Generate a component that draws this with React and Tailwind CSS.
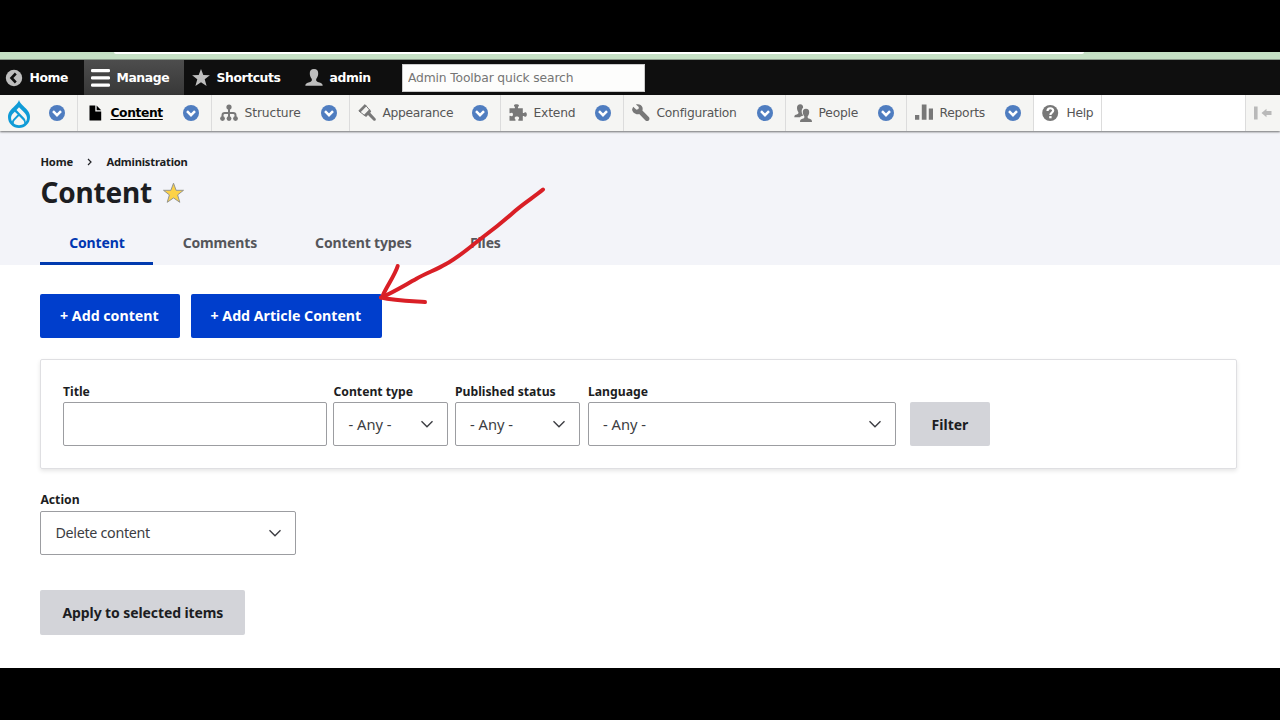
import clsx from "clsx";

const TRAY_ITEMS = [
  { label: "Content", icon: FileIcon, width: "w-[134px]", text: "text-[12.3px] tracking-[-0.4px]", active: true, menu: true },
  { label: "Structure", icon: StructureIcon, width: "w-[138px]", text: "text-[12.3px] tracking-[-0.12px]", menu: true },
  { label: "Appearance", icon: BrushIcon, width: "w-[151px]", text: "text-[12.3px] tracking-[-0.32px]", menu: true },
  { label: "Extend", icon: PuzzleIcon, width: "w-[123px]", text: "text-[12.3px] tracking-[-0.2px]", menu: true },
  { label: "Configuration", icon: WrenchIcon, width: "w-[162px]", text: "text-[12.3px] tracking-[-0.25px]", menu: true },
  { label: "People", icon: PeopleIcon, width: "w-[121px]", text: "text-[12.3px] tracking-[-0.2px]", menu: true },
  { label: "Reports", icon: BarsIcon, width: "w-[127px]", text: "text-[12.3px] tracking-[-0.25px]", menu: true },
  { label: "Help", icon: HelpIcon, width: "w-[68px]", text: "text-[12.3px] tracking-[-0.3px]", plain: true },
];

const TABS = [
  { label: "Content", width: "w-[113px]", active: true },
  { label: "Comments", width: "w-[133px]" },
  { label: "Content types", width: "w-[154px]" },
  { label: "Files", width: "w-[90px]" },
];

export default function App() {
  return (
    <div className="relative flex h-[720px] w-[1280px] flex-col overflow-hidden bg-black pt-[52px] pb-[52px] font-['Noto_Sans',sans-serif] text-[#1c1d22]">
      <BrowserEdge />
      <AdminBar />
      <Tray />
      <PageHeader />
      <main className="flex-1 bg-white pt-[29px] pl-[40.4px]">
        <div className="flex gap-[11px]">
          <PrimaryButton className="w-[140px]">+ Add content</PrimaryButton>
          <PrimaryButton className="w-[191px]">+ Add Article Content</PrimaryButton>
        </div>
        <Filters />
        <BulkActions />
      </main>
      <Annotation />
    </div>
  );
}

function BrowserEdge() {
  return (
    <div className="h-[8px] shrink-0 border-b border-[#8a9a8b] bg-[#c5e0c5]">
      <div className="ml-[114px] h-[2px] w-[970px] rounded-b-full bg-white" />
    </div>
  );
}

function AdminBar() {
  return (
    <div className="flex h-[35px] shrink-0 items-center bg-[#0f0f0f] font-['DejaVu_Sans',Verdana,sans-serif] text-[12.4px] font-bold text-white">
      <BarLink icon={BackIcon} label="Home" className="w-[84px] pl-[5px]" />
      <BarLink
        icon={MenuIcon}
        label="Manage"
        className="w-[100px] bg-linear-to-b from-[#4d4d4d] to-[#383838] pl-[7px]"
      />
      <BarLink icon={StarIcon} label="Shortcuts" className="w-[112px] pl-[8px]" />
      <BarLink icon={UserIcon} label="admin" className="w-[106px] pl-[9px]" />
      <input
        placeholder="Admin Toolbar quick search"
        className="h-[28px] w-[243px] border border-[#ccc] bg-[#fdfdfc] px-[5px] pt-px text-[12.3px] font-normal tracking-[-0.14px] text-[#333] placeholder:text-[#757575]"
      />
    </div>
  );
}

function BarLink({ icon: Icon, label, className }) {
  return (
    <div className={clsx("flex h-full items-center gap-[6.5px] whitespace-nowrap", className)}>
      <Icon />
      <span className="pt-px tracking-[-0.42px]">{label}</span>
    </div>
  );
}

function Tray() {
  return (
    <div className="z-10 flex h-[36px] shrink-0 bg-white font-['DejaVu_Sans',Verdana,sans-serif] text-[#565656] shadow-[0_1px_2px_rgba(0,0,0,0.55)]">
      <div className="flex w-[78px] items-center justify-between border-r border-[#dcdcdc] bg-[#f5f5f3] pr-[12px] pl-[8px]">
        <DrupalIcon />
        <MenuToggle />
      </div>
      {TRAY_ITEMS.map(({ label, icon: Icon, width, text, active, menu, plain }) => (
        <div
          key={label}
          className={clsx(
            "flex items-center border-r border-[#dcdcdc] pr-[12px] pl-[8px] whitespace-nowrap",
            width,
            plain ? "bg-white" : "bg-[#f5f5f3]",
          )}
        >
          <Icon />
          <span
            className={clsx(
              "ml-[6.5px]",
              text,
              active && "font-bold text-black underline decoration-1 underline-offset-2",
            )}
          >
            {label}
          </span>
          {menu && <MenuToggle />}
        </div>
      ))}
      <div className="ml-auto flex w-[35px] items-center border-l border-[#dcdcdc] bg-[#f5f5f3] pl-[8px]">
        <svg width="18" height="14" viewBox="0 0 18 14" fill="#b9b9b9">
          <path d="M0 .5h3.600v13H0zM7.500 7l5-4.300v2.300h5v4h-5v2.300z" />
        </svg>
      </div>
    </div>
  );
}

function MenuToggle() {
  return (
    <svg className="ml-auto shrink-0" width="16" height="16" viewBox="0 0 16 16">
      <circle cx="8" cy="8" r="8" fill="#4f7dc0" />
      <path d="M4 6.200l4 4 4-4" fill="none" stroke="#fff" strokeWidth="2.500" />
    </svg>
  );
}

function PageHeader() {
  return (
    <header className="h-[134px] shrink-0 bg-[#f3f4f9] pt-[21px] pl-[40.4px]">
      <div className="flex h-[20px] items-center text-[11.2px] leading-[18px] font-bold">
        <span className="w-[47px] tracking-[-0.1px]">Home</span>
        <svg width="5" height="8" viewBox="0 0 5 8" fill="none" stroke="#232429" strokeWidth="1.200">
          <path d="M1 1l3 3-3 3" />
        </svg>
        <span className="ml-[14px] tracking-[-0.2px]">Administration</span>
      </div>
      <div className="flex h-[40px] items-center">
        <h1 className="w-[122px] text-[28px] leading-[40px] font-bold tracking-[-0.2px]">Content</h1>
        <svg className="mt-[2px]" width="23" height="22" viewBox="0 0 23 22">
          <path
            d="M11.500 1.200l2.600 7.100h7.400l-5.900 4.600 2.200 7.400-6.300-4.400-6.300 4.400 2.200-7.400-5.900-4.600h7.400z"
            fill="#fdd247"
            stroke="#95958e"
            strokeWidth="1"
          />
        </svg>
      </div>
      <nav className="mt-[8px] flex h-[45px] text-[14px] font-bold tracking-[-0.14px]">
        {TABS.map((tab) => (
          <div
            key={tab.label}
            className={clsx(
              "flex items-center justify-center whitespace-nowrap",
              tab.width,
              tab.active ? "border-b-3 border-[#003aaf] pt-[3px] text-[#0036b1]" : "text-[#55565b]",
            )}
          >
            {tab.label}
          </div>
        ))}
      </nav>
    </header>
  );
}

function PrimaryButton({ className, children }) {
  return (
    <button
      className={clsx(
        "h-[44px] rounded-[2px] bg-[#003ecc] pr-[2px] text-[14.2px] font-bold whitespace-nowrap text-white",
        className,
      )}
    >
      {children}
    </button>
  );
}

function Filters() {
  return (
    <section className="mt-[21px] flex h-[110px] w-[1197px] items-start rounded-[2px] border border-[#dfdfe2] pt-[22px] pl-[21.6px] shadow-[0_2px_4px_rgba(0,0,0,0.1)]">
      <Field label="Title" className="w-[264px]">
        <input className="block h-[44px] w-full rounded-[2px] border border-[#9c9da1] bg-white" />
      </Field>
      <Field label="Content type" className="ml-[6.5px] w-[114.5px]">
        <Select value="- Any -" className="text-[14.7px]" />
      </Field>
      <Field label="Published status" className="ml-[7px] w-[125.5px]">
        <Select value="- Any -" className="text-[14.7px]" />
      </Field>
      <Field label="Language" className="ml-[7.5px] w-[308px]">
        <Select value="- Any -" className="text-[14.7px]" />
      </Field>
      <button className="mt-[20px] ml-[14px] h-[44px] w-[80px] rounded-[2px] bg-[#d3d4d9] text-[14px] font-bold">
        Filter
      </button>
    </section>
  );
}

function BulkActions() {
  return (
    <>
      <Field label="Action" className="mt-[21px] w-[256px]">
        <Select value="Delete content" className="mt-px text-[14.3px] tracking-[-0.3px]" />
      </Field>
      <button className="mt-[35px] block h-[45px] w-[205px] rounded-[2px] bg-[#d3d4d9] text-[14px] font-bold tracking-[-0.1px]">
        Apply to selected items
      </button>
    </>
  );
}

function Field({ label, className, children }) {
  return (
    <div className={className}>
      <div className="h-[20px] pt-px text-[12.2px] leading-[18px] font-bold whitespace-nowrap">{label}</div>
      {children}
    </div>
  );
}

function Select({ value, className }) {
  return (
    <div
      className={clsx(
        "flex h-[44px] items-center justify-between rounded-[2px] border border-[#9c9da1] bg-white pr-[13px] pl-[14px] text-[#3c3d42]",
        className,
      )}
    >
      <span>{value}</span>
      <svg width="14" height="9" viewBox="0 0 14 9" fill="none" stroke="#3c3d42" strokeWidth="1.400">
        <path d="M1.500 1.200l5.500 5.500 5.500-5.500" />
      </svg>
    </div>
  );
}

/* hand drawn arrow laid over the page */
function Annotation() {
  return (
    <svg
      className="pointer-events-none absolute top-[180px] left-[370px] z-20"
      width="190"
      height="130"
      viewBox="370 180 190 130"
      fill="none"
      stroke="#d91f26"
      strokeWidth="4"
      strokeLinecap="round"
      strokeLinejoin="round"
    >
      <path d="M543 189.500C534 197 524 203 515 211C504 221 494 229 483 237C470 247 459 257 446 264C436 270 426 273 416 279C405 285 392 293 381 297.500" />
      <path d="M397.700 266C395 275 387 286 383 295" />
      <path d="M381 297.500C394 300.500 410 301 425 302" />
    </svg>
  );
}

function Glyph({ children, fill = "#787878", ...rest }) {
  return (
    <svg className="shrink-0" width="18" height="18" viewBox="0 0 18 18" fill={fill} {...rest}>
      {children}
    </svg>
  );
}

function BackIcon() {
  return (
    <Glyph fill="#bebebe">
      <circle cx="9" cy="9" r="8.200" />
      <path d="M10.800 4.500L6.500 9l4.300 4.500" fill="none" stroke="#0f0f0f" strokeWidth="2.600" />
    </Glyph>
  );
}

function MenuIcon() {
  return (
    <svg className="shrink-0" width="19" height="18" viewBox="0 0 19 18" fill="#fff">
      <rect y="0" width="19" height="3.200" rx="1.300" />
      <rect y="7.300" width="19" height="3.200" rx="1.300" />
      <rect y="14.600" width="19" height="3.200" rx="1.300" />
    </svg>
  );
}

function StarIcon() {
  return (
    <Glyph fill="#bebebe">
      <path d="M9 0l2.300 5.900 6.600.4-5.200 4 1.900 6.800L9 13.300l-5.600 3.800 1.900-6.800-5.200-4 6.600-.4z" />
    </Glyph>
  );
}

function UserIcon() {
  return (
    <Glyph fill="#bebebe">
      <path d="M9 0c3 0 4.400 2 4.200 4.800-.1 2-.8 3.900-2 5.200-.4 1.800.4 2.700 2.400 3.300 2.600.7 4 1.300 4.100 3.500H.3c.1-2.200 1.500-2.800 4.100-3.500 2-.6 2.800-1.500 2.400-3.300-1.200-1.300-1.900-3.200-2-5.200C4.600 2 6 0 9 0z" />
    </Glyph>
  );
}

function DrupalIcon() {
  return (
    <svg className="mt-[2px]" width="22" height="28" viewBox="0 0 22 28">
      <path
        d="M15.600 6.300C13.500 4.200 11.600 2.300 11 0c-.6 2.300-2.500 4.200-4.600 6.300C3.200 9.400 0 12.300 0 17c0 6.300 4.900 11 11 11s11-4.700 11-11c0-4.700-3.200-7.600-6.400-10.700z"
        fill="#0f9bd7"
      />
      {/* the two crossing ribbons inside the drop */}
      <g fill="#f5f5f3">
        <path d="M11 7.200l3 3c2.800 2.800 5.300 5.200 5 8.400-.1 1.400-.6 2.500-1.400 3.500.2-1.900-.5-3.300-1.900-4.700L8.500 10z" />
        <path d="M6.800 11.800l2.900 2.800-4.500 4.700c-.6.700-1 1.500-1.100 2.300-1-1.600-1.400-3.800-.7-5.500.6-1.700 2-3 3.400-4.300z" />
        <path d="M11 16l4.200 4.200c.9 1 1.200 2.200.9 3.300-1.400 1.100-3.100 1.700-5.100 1.700s-3.700-.6-5.100-1.700c-.3-1.100 0-2.300.9-3.300z" />
      </g>
    </svg>
  );
}

function FileIcon() {
  return (
    <Glyph fill="#000">
      <path d="M3.500 1.500h5.800v6h5.900v9H3.500z" />
      <path d="M10.600 1.500l4.600 4.700h-4.600z" />
    </Glyph>
  );
}

function StructureIcon() {
  return (
    <Glyph>
      <circle cx="9" cy="3" r="2.600" />
      <circle cx="2.500" cy="14.600" r="2.400" />
      <circle cx="9" cy="14.600" r="2.400" />
      <circle cx="15.500" cy="14.600" r="2.400" />
      <path d="M9 3v11M2.500 14.500v-3.200q0-2.300 2.300-2.300h8.400q2.300 0 2.300 2.300v3.200" fill="none" stroke="#787878" strokeWidth="2" />
    </Glyph>
  );
}

function BrushIcon() {
  return (
    <Glyph>
      <path d="M.3 6.700L6.700.2l2 1.700-6.300 6.600z" />
      <path d="M7.200.8l4.500 5.300-5.200 5.300-5.500-4.300" fill="none" stroke="#787878" strokeWidth="1" />
      <path d="M5.700 11.200l6-6.200 1.500 2.500-1 1.300 5.300 5.700c1.100 1.300-.7 3.100-2 1.900l-5.500-5.300-1.900 1.900z" />
    </Glyph>
  );
}

function PuzzleIcon() {
  return (
    <Glyph>
      <path d="M.5 4.200h5.300C6.500 3 4.600 2.500 5 1.200 5.600-.1 9.300-.1 9.900 1.200c.4 1.300-1.500 1.800-.8 3h4.700v4.500c1.200.8 1.600-.7 2.700-.5 1.800.5 1.800 4 0 4.500-1.100.2-1.500-1.300-2.700-.5v4.600H9.500c-1-1.200.8-1.600.6-3-.4-1.700-4-1.700-4.400 0-.2 1.400 1.600 1.800.6 3H.5V12c.9-.8 1.500.5 2.500.2 1.300-.4 1.300-3 0-3.400-1-.3-1.600 1-2.500.2z" />
    </Glyph>
  );
}

function WrenchIcon() {
  return (
    <Glyph>
      <path d="M1.200 2.800l3.300 2.900 2-.6.300-2L3.900.6c2.800-.9 5.600.2 6.500 2.700.4 1.200.3 2.300 0 3.300l6.400 6.500c2 2.300-1 5.300-3.300 3.400L7.200 10C3.600 11 .1 8.100.1 5.200z" />
    </Glyph>
  );
}

function PeopleIcon() {
  return (
    <Glyph viewBox="0 0 18 19" height="19">
      <path d="M6.200.3c2 0 3.100 1.400 2.900 3.400C8 4.500 7.400 6.300 7.800 8.600c.2 1.200.7 2 1.400 2.800-1.600.6-2.700 1-3.300 1.800H.3c0-1.800.8-2.300 2.500-2.700 1.600-.5 1.900-1.200 1.500-2.500C2.600 5.800 2.100.3 6.200.3z" />
      <path d="M12 4.700c2.300 0 3.400 1.600 3.200 3.800-.1 1.500-.6 2.900-1.500 3.800-.3 1.500.3 2.100 1.900 2.500 1.700.5 2.400 1.100 2.400 3.200H6c0-2.100.7-2.700 2.400-3.200 1.600-.4 2.200-1 1.900-2.500-.9-.9-1.400-2.300-1.500-3.800-.2-2.200.9-3.800 3.200-3.800z" />
    </Glyph>
  );
}

function BarsIcon() {
  return (
    <Glyph>
      <path d="M0 11h4.300v4.700H0zM6.800 .5h4.700v15.200H6.800zM13.800 4.500H18v11.200h-4.200z" />
    </Glyph>
  );
}

function HelpIcon() {
  return (
    <Glyph>
      <circle cx="8.200" cy="9" r="8" />
      <path d="M5.500 7.100c0-3.700 5.700-3.700 5.700-.5 0 2-2.800 2-2.800 4.300" fill="none" stroke="#fff" strokeWidth="2.200" />
      <rect x="7.200" y="12.100" width="2.400" height="2.200" fill="#fff" />
    </Glyph>
  );
}
